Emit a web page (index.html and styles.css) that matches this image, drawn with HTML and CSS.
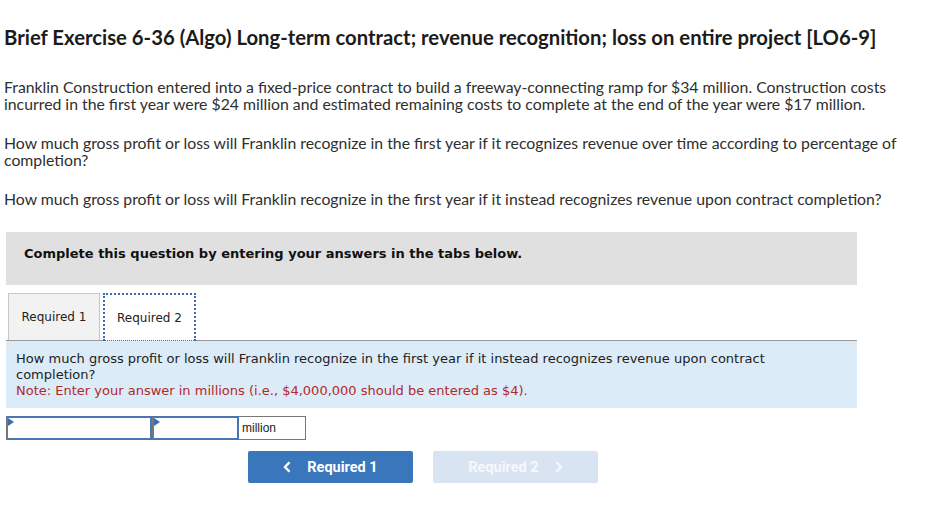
FILE: index.html
```html
<!DOCTYPE html>
<html>
<head>
<meta charset="utf-8">
<link rel="stylesheet" href="styles.css">
</head>
<body>
<div class="page">
  <h1 class="title">Brief Exercise 6-36 (Algo) Long-term contract; revenue recognition; loss on entire project [LO6-9]</h1>
  <p class="para">Franklin Construction entered into a fixed-price contract to build a freeway-connecting ramp for $34 million. Construction costs incurred in the first year were $24 million and estimated remaining costs to complete at the end of the year were $17 million.</p>
  <p class="para">How much gross profit or loss will Franklin recognize in the first year if it recognizes revenue over time according to percentage of completion?</p>
  <p class="para">How much gross profit or loss will Franklin recognize in the first year if it instead recognizes revenue upon contract completion?</p>

  <div class="work">
    <div class="banner">Complete this question by entering your answers in the tabs below.</div>
    <div class="tabs">
      <div class="tab">Required 1</div>
      <div class="tab active">Required 2</div>
    </div>
    <div class="qbox">
      <div class="qtext">How much gross profit or loss will Franklin recognize in the first year if it instead recognizes revenue upon contract completion?</div>
      <div class="note">Note: Enter your answer in millions (i.e., $4,000,000 should be entered as $4).</div>
    </div>
    <div class="answers">
      <div class="cell c1"><span class="flag"></span></div>
      <div class="cell c2"><span class="flag"></span></div>
      <div class="unit">million</div>
    </div>
    <div class="nav">
      <button class="btn prev"><svg class="chev" width="8" height="12" viewBox="0 0 8 12"><path d="M6.5 1.2 L2 6 L6.5 10.8" fill="none" stroke="currentColor" stroke-width="2.4"/></svg><span>Required 1</span></button>
      <button class="btn next"><span>Required 2</span><svg class="chev" width="8" height="12" viewBox="0 0 8 12"><path d="M1.5 1.2 L6 6 L1.5 10.8" fill="none" stroke="currentColor" stroke-width="2.4"/></svg></button>
    </div>
  </div>
</div>
</body>
</html>
```
FILE: styles.css
```css
* { box-sizing: border-box; }
body {
  margin: 0;
  background: #fff;
  font-family: "Lato", "Open Sans", sans-serif;
  color: #2b2b2b;
}
.page {
  padding: 0 0 0 4px;
  width: 920px;
}
.title {
  margin: 0;
  padding-top: 26px;
  font-size: 20.3px;
  line-height: 22px;
  font-weight: 700;
  color: #1b1b1b;
}
.para {
  margin: 0;
  font-size: 15.8px;
  line-height: 17px;
  color: #2f2f2f;
}
.title + .para { margin-top: 30px; }
.para + .para { margin-top: 22px; }
.work {
  margin-left: 2px;
  width: 851px;
  margin-top: 25px;
  font-family: "DejaVu Sans", Verdana, sans-serif;
}
.banner {
  background: #e0e0e0;
  height: 53px;
  padding: 14px 0 0 18px;
  line-height: 16px;
  font-weight: 700;
  font-size: 13px;
  color: #111;
}
.tabs {
  display: flex;
  margin-top: 8px;
  padding-left: 2px;
  gap: 3px;
  border-bottom: 1px solid #999;
}
.tab {
  width: 92px;
  height: 47px;
  display: flex;
  align-items: center;
  justify-content: center;
  font-size: 12px;
  color: #222;
  background: #f2f2f2;
  border: 1px solid #c8c8c8;
  border-bottom: none;
}
.tab.active {
  background: #fff;
  border: 1px dotted #3a6db5;
  border-width: 2px 2px 1px 2px;
  width: 93px;
  margin-bottom: -1px;
  height: 48px;
}
.qbox {
  background: #dcebf8;
  padding: 10px 10px 9px 10px;
  font-size: 13px;
  line-height: 16px;
  color: #222;
}
.qtext { padding-right: 60px; }
.note { color: #b02a2a; }
.answers {
  display: flex;
  margin-top: 8px;
  height: 24px;
}
.cell {
  position: relative;
  height: 24px;
  border: 2px solid #4a76b3;
  border-left-color: #777;
  background: #fff;
}
.c1 { width: 146px; }
.c2 { width: 87px; }
.flag {
  position: absolute;
  left: 0;
  top: 0;
  width: 0;
  height: 0;
  border-top: 4px solid transparent;
  border-bottom: 4px solid transparent;
  border-left: 6px solid #3a6db5;
}
.unit {
  width: 67px;
  height: 24px;
  border: 1px solid #777;
  border-left: none;
  display: flex;
  align-items: center;
  padding-left: 3px;
  font-family: "Liberation Sans", Arial, sans-serif;
  font-size: 12px;
  color: #222;
}
.nav {
  display: flex;
  gap: 20px;
  margin-top: 11px;
  padding-left: 242px;
}
.btn {
  width: 165px;
  height: 32px;
  border: none;
  border-radius: 2px;
  font-family: "Roboto", "Liberation Sans", sans-serif;
  font-weight: 700;
  font-size: 14.5px;
  color: #fff;
  display: flex;
  align-items: center;
  justify-content: center;
  gap: 16px;
}
.prev { background: #3a76bb; padding-right: 6px; }
.next { background: #d9e4f2; color: #f6f8fb; padding-left: 6px; }
```
